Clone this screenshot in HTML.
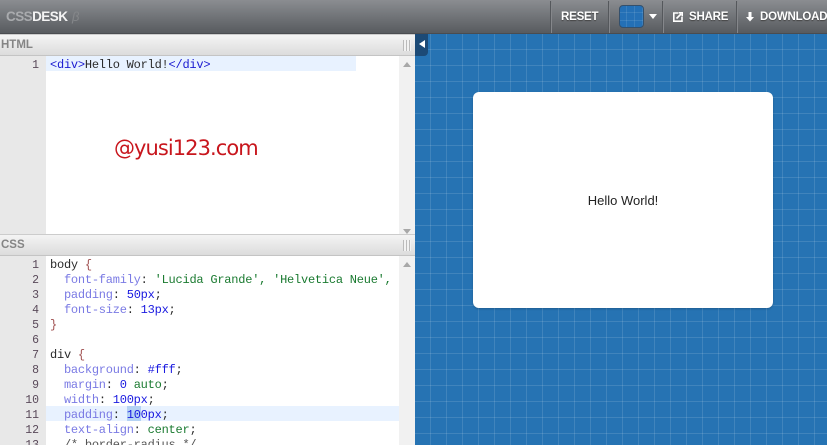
<!DOCTYPE html>
<html>
<head>
<meta charset="utf-8">
<style>
html,body{margin:0;padding:0;width:827px;height:445px;overflow:hidden;background:#fff}
body{position:relative;font-family:"Liberation Sans",sans-serif}
div,span.a{position:absolute}
#top{left:0;top:0;width:827px;height:34px;background:linear-gradient(#8b8d91 0,#7b7e82 30%,#585b5f 100%);border-bottom:1px solid #4a4c50;box-sizing:border-box}
.sep{top:1px;width:1px;height:32px;background:#55585c;border-right:1px solid #85878b}
.btn{top:10px;height:14px;line-height:14px;font-size:11.5px;font-weight:bold;color:#fff;text-shadow:0 1px 1px #444;letter-spacing:-.2px;white-space:nowrap}
.hdr{left:0;width:415px;height:20px;background:linear-gradient(#f4f4f4,#dcdcdc);border-top:1px solid #ccc;border-bottom:1px solid #c4c4c4;box-sizing:content-box}
.hdr b{position:absolute;left:1px;top:3px;font-size:11.5px;line-height:14px;color:#858585}
.grip{top:5px;left:403px;width:8px;height:11px;background:repeating-linear-gradient(90deg,#bbb 0 1px,#f2f2f2 1px 3px)}
.gut{left:0;width:46px;background:#e8e8e8}
.sb{left:399px;width:16px;background:#f1f1f1}
.up{width:0;height:0;border-left:4px solid transparent;border-right:4px solid transparent;border-bottom:5px solid #a8a8a8}
.dn{width:0;height:0;border-left:4px solid transparent;border-right:4px solid transparent;border-top:5px solid #a8a8a8}
.code,.num{font-family:"Liberation Mono",monospace;font-size:12px;letter-spacing:-.23px;line-height:15px;white-space:pre}
.code{left:50px;color:#2a2a2a}
.num{left:0;width:39px;text-align:right;color:#5a4a5a;letter-spacing:0;font-size:11.5px}
.p{color:#7a7ae4}.k{color:#1a1ad0}.s{color:#1a7a30}.t{color:#1a1ae0}
#right{left:415px;top:34px;width:412px;height:411px;background-color:#2673b3;background-image:linear-gradient(rgba(255,255,255,.12) 1px,transparent 1px),linear-gradient(90deg,rgba(255,255,255,.12) 1px,transparent 1px);background-size:16px 16px;background-position:0 15px,15px 0}
</style>
</head>
<body>
<div id="top"></div>
<div style="left:6px;top:9px;font-size:13.5px;line-height:16px;font-weight:bold;letter-spacing:-.55px;color:#a9abae">CSS<span style="color:#f4f4f4">DESK</span></div>
<div style="left:72px;top:9px;font-size:13px;line-height:16px;font-style:italic;color:#85878a">β</div>

<div class="sep" style="left:550px"></div>
<div class="sep" style="left:608px"></div>
<div class="sep" style="left:662px"></div>
<div class="sep" style="left:736px"></div>
<div class="btn" style="left:561px">RESET</div>
<div style="left:619px;top:5px;width:25px;height:23px;border-radius:4px;box-sizing:border-box;border:1px solid #34506c;background-color:#2470b6;background-image:linear-gradient(rgba(255,255,255,.1) 1px,transparent 1px),linear-gradient(90deg,rgba(255,255,255,.1) 1px,transparent 1px);background-size:8px 8px;background-position:0 6px,6px 0"></div>
<div style="left:649px;top:14px;width:0;height:0;border-left:4px solid transparent;border-right:4px solid transparent;border-top:5px solid #fff"></div>
<svg style="position:absolute;left:673px;top:12px" width="10" height="10" viewBox="0 0 10 10"><path d="M5 1H.8V9.200H9V5" fill="none" stroke="#fff" stroke-width="1.600"/><path d="M3.500 6.500L8 2M5.500 .8H9.200V4.500" fill="none" stroke="#fff" stroke-width="1.600"/></svg>
<div class="btn" style="left:689px">SHARE</div>
<svg style="position:absolute;left:746px;top:12px" width="8" height="10" viewBox="0 0 8 10"><path d="M2.500 0H5.500V5H8L4 9.500L0 5H2.500Z" fill="#fff"/></svg>
<div class="btn" style="left:760px">DOWNLOAD</div>

<!-- HTML pane -->
<div class="hdr" style="top:34px"><b>HTML</b><div class="grip"></div></div>
<div class="gut" style="top:56px;height:178px"></div>
<div class="sb" style="top:56px;height:178px"></div>
<div class="up" style="left:403px;top:62px"></div>
<div class="dn" style="left:403px;top:229px"></div>
<div style="left:46px;top:56px;width:310px;height:15px;background:#e8f2ff"></div>
<div class="num" style="top:58px">1</div>
<div class="code" style="top:58px"><span class="k">&lt;div&gt;</span>Hello World!<span class="k">&lt;/div&gt;</span></div>
<div style="left:114px;top:133px;font-family:'DejaVu Sans',sans-serif;font-size:21px;line-height:30px;letter-spacing:-.95px;color:#c8161d;white-space:nowrap">@yusi123.com</div>

<!-- CSS pane -->
<div class="hdr" style="top:234px"><b>CSS</b><div class="grip"></div></div>
<div class="gut" style="top:256px;height:189px"></div>
<div class="sb" style="top:256px;height:189px"></div>
<div class="up" style="left:403px;top:262px"></div>
<div style="left:46px;top:406px;width:353px;height:15px;background:#e8f2ff"></div>
<div style="left:127px;top:406px;width:14px;height:15px;background:#b4d2f4"></div>
<div class="num" style="top:258px;height:187px;overflow:hidden">1
2
3
4
5
6
7
8
9
10
11
12
13</div>
<div class="code" style="top:258px;height:187px;overflow:hidden">body <span style="color:#a05050">{</span>
  <span class="p">font-family</span>: <span class="s">'Lucida Grande', 'Helvetica Neue',</span>
  <span class="p">padding</span>: <span class="t">50px</span>;
  <span class="p">font-size</span>: <span class="t">13px</span>;
<span style="color:#a05050">}</span>

div <span style="color:#a05050">{</span>
  <span class="p">background</span>: <span class="t">#fff</span>;
  <span class="p">margin</span>: <span class="t">0</span> <span class="s">auto</span>;
  <span class="p">width</span>: <span class="t">100px</span>;
  <span class="p">padding</span>: <span class="t">100px</span>;
  <span class="p">text-align</span>: <span class="s">center</span>;
  <span style="color:#555">/* border-radius */</span></div>

<!-- Preview -->
<div id="right"></div>
<div style="left:415px;top:34px;width:13px;height:22px;background:#1c4a76;border-radius:0 0 4px 0"></div>
<div style="left:419px;top:40px;width:0;height:0;border-top:4px solid transparent;border-bottom:4px solid transparent;border-right:6px solid #fff"></div>
<div style="left:473px;top:92px;width:300px;height:216px;background:#fff;border-radius:6px;text-align:center;font-size:13px;line-height:218px;color:#222;box-shadow:0 1px 2px rgba(0,0,0,.2)">Hello World!</div>
</body>
</html>
